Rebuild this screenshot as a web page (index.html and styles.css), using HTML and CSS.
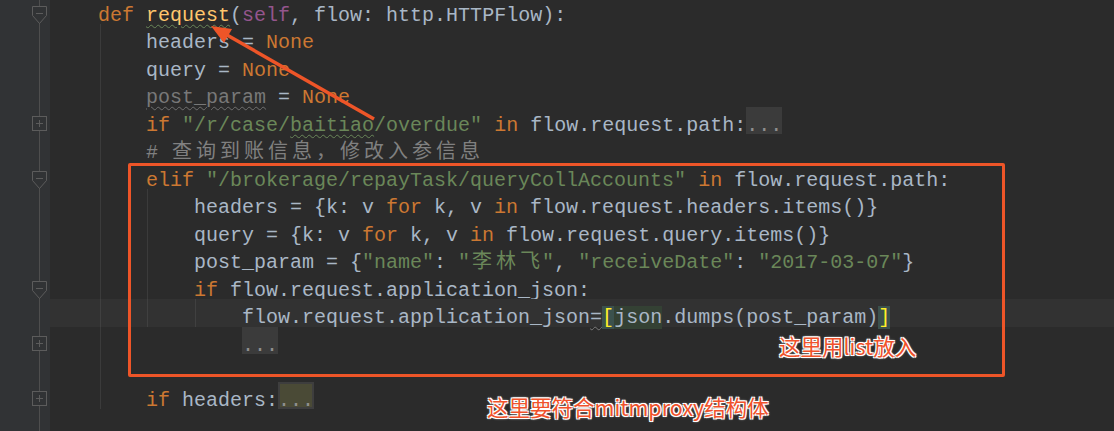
FILE: index.html
```html
<!DOCTYPE html>
<html>
<head>
<meta charset="utf-8">
<title>mitmproxy request hook</title>
<link rel="stylesheet" href="styles.css">
</head>
<body>

<div class="editor">
  <!-- def request -->
  <div class="row">
    <div class="gutter"><svg class="fold" width="15" height="19"><path d="M0.5 0.5H14.5V9.5L7.5 17.5L0.5 9.5Z"/><path d="M4 7.5H11"/></svg></div>
    <div class="code">    <span class="k">def</span> <span class="fn warn">request</span>(<span class="self">self</span>, flow: http.HTTPFlow):</div>
  </div>
  <div class="row">
    <div class="gutter"></div>
    <div class="code ga">        headers = <span class="k">None</span></div>
  </div>
  <div class="row">
    <div class="gutter"></div>
    <div class="code ga">        query = <span class="k">None</span></div>
  </div>
  <div class="row">
    <div class="gutter"></div>
    <div class="code ga">        <span class="unused">post_param</span> = <span class="k">None</span></div>
  </div>
  <div class="row">
    <div class="gutter"><svg class="fold" width="15" height="15"><rect x="0.5" y="0.5" width="14" height="14"/><path d="M4 7.5H11M7.5 4V11"/></svg></div>
    <div class="code ga">        <span class="k">if</span> <span class="s">"/r/case/<span class="typo">baitiao</span>/overdue"</span> <span class="k">in</span> flow.request.path:<span class="folded">...</span></div>
  </div>
  <div class="row">
    <div class="gutter"></div>
    <div class="code ga">        <span class="c"># <span class="cj">查询到账信息，修改入参信息</span></span></div>
  </div>

  <!-- elif block -->
  <div class="row">
    <div class="gutter"><svg class="fold" width="15" height="19"><path d="M0.5 0.5H14.5V9.5L7.5 17.5L0.5 9.5Z"/><path d="M4 7.5H11"/></svg></div>
    <div class="code ga">        <span class="k">elif</span> <span class="s">"/brokerage/repayTask/queryCollAccounts"</span> <span class="k">in</span> flow.request.path:</div>
  </div>
  <div class="row">
    <div class="gutter"></div>
    <div class="code gab">            headers = {k: v <span class="k">for</span> k, v <span class="k">in</span> flow.request.headers.items()}</div>
  </div>
  <div class="row">
    <div class="gutter"></div>
    <div class="code gab">            query = {k: v <span class="k">for</span> k, v <span class="k">in</span> flow.request.query.items()}</div>
  </div>
  <div class="row">
    <div class="gutter"></div>
    <div class="code gab">            post_param = {<span class="s">"name"</span>: <span class="s">"<span class="cj">李林飞</span>"</span>, <span class="s">"receiveDate"</span>: <span class="s">"2017-03-07"</span>}</div>
  </div>
  <div class="row">
    <div class="gutter"><svg class="fold" width="15" height="19"><path d="M0.5 0.5H14.5V9.5L7.5 17.5L0.5 9.5Z"/><path d="M4 7.5H11"/></svg></div>
    <div class="code gab">            <span class="k">if</span> flow.request.application_json:</div>
  </div>
  <div class="row">
    <div class="gutter"></div>
    <div class="code gabc caret">                flow.request.application_json<span class="pep">=</span><span class="brace">[</span><span class="ident">json</span>.dumps(post_param)<span class="brace">]</span></div>
  </div>
  <div class="row">
    <div class="gutter"><svg class="fold" width="15" height="15"><rect x="0.5" y="0.5" width="14" height="14"/><path d="M4 7.5H11M7.5 4V11"/></svg></div>
    <div class="code ga">                <span class="folded">...</span></div>
  </div>
  <div class="row">
    <div class="gutter"></div>
    <div class="code ga"></div>
  </div>
  <div class="row">
    <div class="gutter"><svg class="fold" width="15" height="15"><rect x="0.5" y="0.5" width="14" height="14"/><path d="M4 7.5H11M7.5 4V11"/></svg></div>
    <div class="code ga">        <span class="k">if</span> headers:<span class="folded olive">...</span></div>
  </div>
  <div class="row">
    <div class="gutter"></div>
    <div class="code"></div>
  </div>
</div>

<!-- annotations drawn over the screenshot -->
<div class="frame"></div>
<svg class="arrow" width="1114" height="431">
  <line x1="374" y1="119" x2="227" y2="35"/>
  <polygon points="211,26 232,29 224,43"/>
</svg>
<p class="note note-list">这里用list放入</p>
<p class="note note-struct">这里要符合mitmproxy结构体</p>

</body>
</html>
```

FILE: styles.css
```css
/* editor (darcula) */
body {
  margin: 0;
  height: 431px;
  overflow: hidden;
  position: relative;
  background-color: #2b2b2b;
  font-family: "Liberation Mono", "Noto Sans CJK SC", monospace;
}

.editor {
  margin-top: -3.5px;
}

.row {
  display: flex;
  height: 27.5px;
}

.gutter {
  width: 50px;
  flex: none;
  background: linear-gradient(#4e4e4e, #4e4e4e) 39px 0 / 1px 100% no-repeat, #313335;
}

.fold {
  display: block;
  margin: 9px 0 0 32px;
  fill: #313335;
  stroke: #5c5c5c;
  stroke-width: 1;
}

.code {
  flex: 1;
  height: 27.5px;
  white-space: pre;
  font-size: 20px;
  line-height: 37.4px;
  color: #a9b7c6;
  background-repeat: no-repeat;
}

/* indent guides */
.ga {
  background-image: linear-gradient(#3b3b3b, #3b3b3b);
  background-size: 1px 100%;
  background-position: 50px 0;
}

.gab {
  background-image: linear-gradient(#3b3b3b, #3b3b3b), linear-gradient(#3b3b3b, #3b3b3b);
  background-size: 1px 100%, 1px 100%;
  background-position: 50px 0, 97px 0;
}

.gabc {
  background-image: linear-gradient(#404040, #404040), linear-gradient(#404040, #404040), linear-gradient(#404040, #404040);
  background-size: 1px 100%, 1px 100%, 1px 100%;
  background-position: 50px 0, 97px 0, 145px 0;
}

.caret {
  background-color: #323232;
}

/* syntax */
.k { color: #cc7832; }
.s { color: #6a8759; }
.c { color: #808080; }
.fn { color: #ffc66d; }
.self { color: #94558d; }

.unused {
  color: #787878;
  text-decoration: underline wavy #6f6f6f;
  text-decoration-thickness: 1px;
  text-underline-offset: 3px;
}

.warn,
.typo {
  text-decoration: underline wavy #6a8759;
  text-decoration-thickness: 1px;
  text-underline-offset: 3px;
}

.pep {
  text-decoration: underline wavy #7a7a7a;
  text-decoration-thickness: 1px;
  text-underline-offset: 3px;
}

.brace {
  color: #ffef28;
  background-color: #3b514d;
}

.ident {
  background-color: #344134;
}

.cj {
  font-family: "Noto Sans CJK SC", sans-serif;
  line-height: 1;
  letter-spacing: 4px;
  margin-left: 2px;
  margin-right: -2px;
}

.folded {
  display: inline-block;
  vertical-align: top;
  height: 27.5px;
  background-color: #3b3b3b;
  color: #8f8f8f;
}

.folded.olive {
  background-color: #4a4a36;
  box-shadow: inset 0 0 0 2px #3e3e3e;
}

/* annotations */
.frame {
  position: absolute;
  left: 128px;
  top: 163px;
  width: 877px;
  height: 214px;
  box-sizing: border-box;
  border: 3px solid #ee5528;
  border-radius: 2px;
}

.arrow {
  position: absolute;
  left: 0;
  top: 0;
}

.arrow line {
  stroke: #ee5528;
  stroke-width: 3.5;
}

.arrow polygon {
  fill: #ee5528;
}

.note {
  position: absolute;
  margin: 0;
  font-family: "Noto Sans CJK SC", sans-serif;
  font-size: 21.5px;
  line-height: 1;
  color: #f0522b;
  text-shadow: 0 0 2px #fff, 1px 1px 0 #fff, -1px -1px 0 #fff, 1px -1px 0 #fff, -1px 1px 0 #fff, 0 0 3px #fff;
}

.note-list {
  left: 779px;
  top: 335px;
}

.note-struct {
  left: 487px;
  top: 396px;
}
```
